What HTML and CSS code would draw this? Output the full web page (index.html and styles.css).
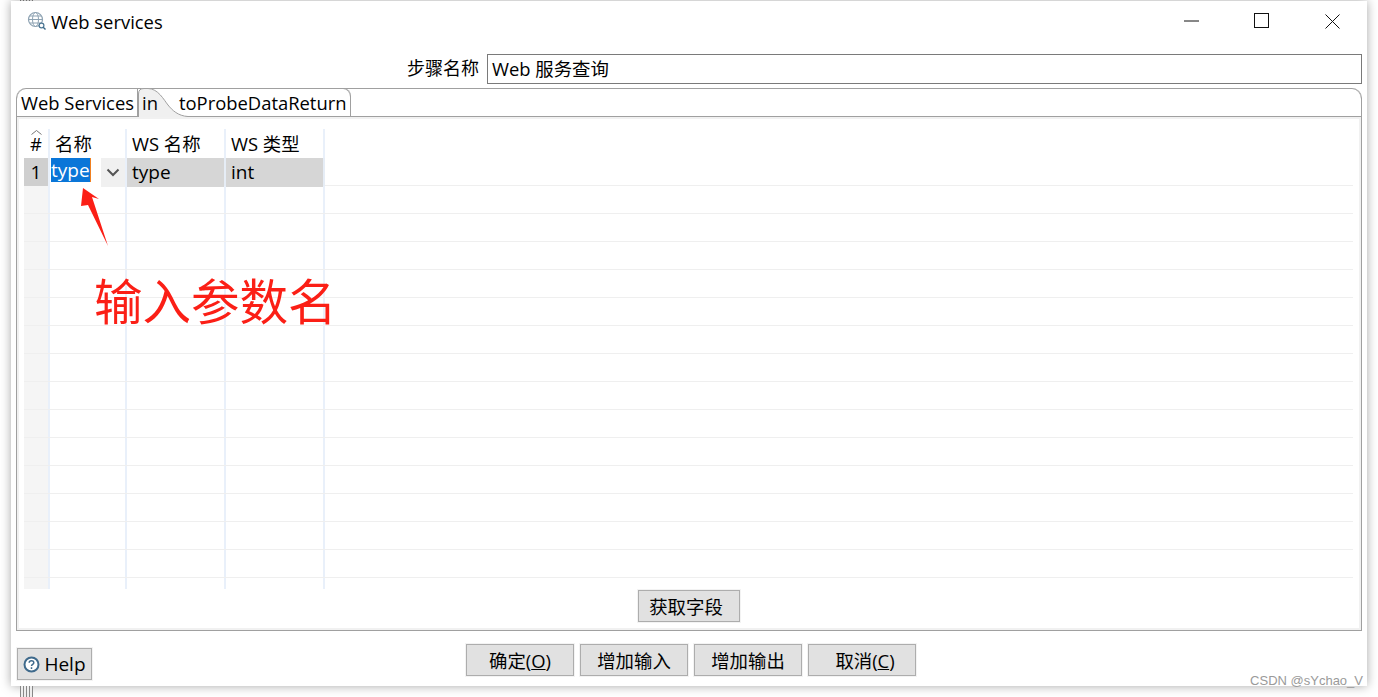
FILE: index.html
```html
<!DOCTYPE html>
<html lang="zh">
<head>
<meta charset="utf-8">
<title>Web services</title>
<link rel="stylesheet" href="styles.css">
</head>
<body>
<div class="stub stub-top"></div>
<main class="window">
  <header class="titlebar">
    <svg class="app-icon" width="20" height="20" viewBox="0 0 20 20" fill="none">
      <circle cx="8.500" cy="8.500" r="7" stroke="#8ea3b3" stroke-width="1.200"/>
      <ellipse cx="8.500" cy="8.500" rx="3" ry="7" stroke="#8ea3b3"/>
      <path d="M1.500 8.500h14M2.600 5h11.800M2.600 12h11.800" stroke="#8ea3b3"/>
      <circle cx="14.500" cy="14.500" r="2.400" fill="#fff" stroke="#4d7794" stroke-width="1.200"/>
      <path d="M16.200 16.200l2.300 2.300" stroke="#3d6a88" stroke-width="1.400"/>
    </svg>
    <span class="title">Web services</span>
    <div class="controls">
      <svg width="15" height="16" viewBox="0 0 15 16"><path d="M0 8h15" stroke="#111" fill="none"/></svg>
      <svg width="16" height="16" viewBox="0 0 16 16"><rect x=".5" y=".5" width="14" height="14" stroke="#111" fill="none"/></svg>
      <svg width="15" height="15" viewBox="0 0 15 15"><path d="M.5.5l14 14M14.500.5l-14 14" stroke="#111" fill="none"/></svg>
    </div>
  </header>

  <div class="step-row">
    <label class="step-label">步骤名称</label>
    <div class="step-input">Web 服务查询</div>
  </div>

  <section class="tabs">
    <div class="tabstrip">
      <span class="tab">Web Services</span>
      <span class="tab tab-active">in
        <svg class="tab-curve" width="51" height="29" viewBox="0 0 51 29"><path d="M0 29V6Q0 .5 6 .5H10C20 .5 26 12 30 17C34 22 40 28 50 28.500V29Z" fill="#f0f0f0"/><path d="M.5 29V6Q.5 .5 6 .5H10C20 .5 26 12 30 17C34 22 40 28 50 28.500" fill="none" stroke="#a0a0a0"/></svg>
      </span>
      <span class="tab tab-last">toProbeDataReturn</span>
    </div>
    <div class="panel">
      <div class="grid">
        <div class="row row-head">
          <div class="cell cell-num">#<svg class="sort" width="11" height="5" viewBox="0 0 11 5"><path d="M.5 4.500L5.500.5l5 4" fill="none" stroke="#777"/></svg></div>
          <div class="cell">名称</div>
          <div class="cell">WS 名称</div>
          <div class="cell">WS 类型</div>
        </div>
        <div class="row row-first">
          <div class="cell cell-num num-selected">1</div>
          <div class="cell cell-edit"><span class="editing">type</span><span class="combo"><svg width="14" height="9" viewBox="0 0 14 9"><path d="M1.500 1.500L7 7l5.500-5.500" fill="none" stroke="#555" stroke-width="2"/></svg></span></div>
          <div class="cell cell-selected">type</div>
          <div class="cell cell-selected">int</div>
        </div>
        <div class="row"><div class="cell cell-num"></div><div class="cell"></div><div class="cell"></div><div class="cell"></div></div>
        <div class="row"><div class="cell cell-num"></div><div class="cell"></div><div class="cell"></div><div class="cell"></div></div>
        <div class="row"><div class="cell cell-num"></div><div class="cell"></div><div class="cell"></div><div class="cell"></div></div>
        <div class="row"><div class="cell cell-num"></div><div class="cell"></div><div class="cell"></div><div class="cell"></div></div>
        <div class="row"><div class="cell cell-num"></div><div class="cell"></div><div class="cell"></div><div class="cell"></div></div>
        <div class="row"><div class="cell cell-num"></div><div class="cell"></div><div class="cell"></div><div class="cell"></div></div>
        <div class="row"><div class="cell cell-num"></div><div class="cell"></div><div class="cell"></div><div class="cell"></div></div>
        <div class="row"><div class="cell cell-num"></div><div class="cell"></div><div class="cell"></div><div class="cell"></div></div>
        <div class="row"><div class="cell cell-num"></div><div class="cell"></div><div class="cell"></div><div class="cell"></div></div>
        <div class="row"><div class="cell cell-num"></div><div class="cell"></div><div class="cell"></div><div class="cell"></div></div>
        <div class="row"><div class="cell cell-num"></div><div class="cell"></div><div class="cell"></div><div class="cell"></div></div>
        <div class="row"><div class="cell cell-num"></div><div class="cell"></div><div class="cell"></div><div class="cell"></div></div>
        <div class="row"><div class="cell cell-num"></div><div class="cell"></div><div class="cell"></div><div class="cell"></div></div>
        <div class="row"><div class="cell cell-num"></div><div class="cell"></div><div class="cell"></div><div class="cell"></div></div>
        <div class="row"><div class="cell cell-num"></div><div class="cell"></div><div class="cell"></div><div class="cell"></div></div>
      </div>
      <div class="panel-actions"><button class="btn btn-fields">获取字段</button></div>
    </div>
  </section>

  <footer class="footer">
    <button class="btn btn-help"><svg width="17" height="17" viewBox="0 0 17 17"><circle cx="8.500" cy="8.500" r="7" fill="#fff" stroke="#3f6a8c" stroke-width="2"/><path d="M6.200 6.800C6.200 4 10.800 4 10.800 6.700C10.800 8.400 8.500 8.300 8.500 10" fill="none" stroke="#3f6a8c" stroke-width="1.500"/><path d="M8.500 11.200v1.800" stroke="#3f6a8c" stroke-width="1.500"/></svg>Help</button>
    <div class="footer-actions">
      <button class="btn btn-main">确定(<u>O</u>)</button>
      <button class="btn btn-main">增加输入</button>
      <button class="btn btn-main">增加输出</button>
      <button class="btn btn-main btn-cancel">取消(<u>C</u>)</button>
    </div>
  </footer>

  <svg class="arrow" width="30" height="60" viewBox="0 0 30 60"><path d="M3 1L19 12L12 10L28 59L8 18L1 19Z" fill="#fb1f16"/></svg>
  <div class="note">输入参数名</div>
  <div class="watermark">CSDN @sYchao_V</div>
</main>
<div class="stub stub-bottom"></div>
</body>
</html>
```
FILE: styles.css
```css
* { box-sizing: border-box; }
html, body { margin: 0; height: 697px; overflow: hidden; }
body {
  background: #fff;
  padding: 1px 11px 0;
  font-family: "Open Sans", "Noto Sans CJK SC", sans-serif;
  font-size: 18.400px;
  color: #000;
  position: relative;
}
.stub {
  position: absolute;
  left: 20px;
  width: 13px;
  background: repeating-linear-gradient(90deg, #888 0 1px, #eee 1px 3px);
}
.stub-top { top: 0; height: 1px; }
.stub-bottom { top: 686px; height: 11px; }
.window {
  position: relative;
  width: 1356px;
  height: 685px;
  background: #fff;
  box-shadow: 0 0 10px rgba(0, 0, 0, .35);
  padding: 0 5px;
}
.titlebar {
  height: 44px;
  display: flex;
  align-items: center;
  margin: 0 -5px;
  padding: 0 27px 4px 16px;
}
.app-icon { margin-right: 4px; }
.title { font-size: 18.400px; }
.controls {
  margin-left: auto;
  display: flex;
  gap: 55px;
  align-items: center;
}
.step-row {
  height: 30px;
  margin-top: 9px;
  display: flex;
  justify-content: flex-end;
  align-items: center;
  gap: 8px;
}
.step-label { font-size: 18px; padding-bottom: 4px; }
.step-input {
  width: 875px;
  height: 30px;
  border: 1px solid #7a7a7a;
  padding: 0 4px;
  line-height: 28px;
}
.tabs {
  margin-top: 4px;
  height: 543px;
  border: 1px solid #a0a0a0;
  border-top: 0;
  border-radius: 10px 10px 0 0;
  display: flex;
  flex-direction: column;
  background: #fff;
  position: relative;
  box-shadow: inset 0 1px 0 #a0a0a0;
}
.tabstrip {
  height: 29px;
  display: flex;
  border-bottom: 1px solid #a0a0a0;
  flex: none;
}
.tab {
  line-height: 30px;
  padding: 0 3px 0 4px;
  white-space: nowrap;
  position: relative;
  border-right: 1px solid #a0a0a0;
}
.tab-active {
  width: 26px;
  border-right: 0;
  height: 29px;
  z-index: 1;
  isolation: isolate;
}
.tab-curve {
  position: absolute;
  left: 0;
  top: 0;
  z-index: -1;
}
.tab-last {
  margin-left: 14px;
  padding: 0 4px 0 1px;
  border-radius: 0 8px 0 0;
  box-shadow: inset 0 1px 0 #a0a0a0;
  z-index: 2;
}
.panel {
  flex: 1;
  border: 2px solid #f1f1f1;
  padding: 10px 6px 0 5px;
  display: flex;
  flex-direction: column;
}
.grid {
  height: 460px;
  overflow: hidden;
  flex: none;
}
.row {
  display: grid;
  grid-template-columns: 26px 77px 99px 99px 1fr;
  height: 28px;
  border-bottom: 1px solid #efefef;
}
.row-head { height: 29px; border-bottom: 0; }
.cell {
  border-right: 2px solid #e9f0fa;
  padding-left: 5px;
  line-height: 27px;
  white-space: nowrap;
  position: relative;
}
.row-head .cell { font-size: 18.400px; line-height: 30px; padding-left: 5px; }
.row-head .cell-num, .cell-num {
  background: #f5f5f5;
  padding: 0;
  text-align: center;
}
.row-head .cell-num { background: transparent; }
.sort {
  position: absolute;
  left: 7px;
  top: 1px;
}
.row-first .cell { font-size: 19px; }
.num-selected { background: #cfcfcf; line-height: 28px; }
.cell-selected { background: #d6d6d6; line-height: 29px; border-right-color: #e6edf6; padding-left: 5px; }
.cell-edit {
  padding: 0;
  display: flex;
  background: #fff;
}
.editing {
  width: 41px;
  height: 24px;
  margin-left: 1px;
  background: #0a76d8;
  color: #fff;
  line-height: 24px;
  border-right: 1px solid #f08020;
}
.combo {
  width: 25px;
  margin-left: 10px;
  background: #f0f0f0;
  display: flex;
  align-items: center;
  justify-content: center;
}
.panel-actions {
  display: flex;
  justify-content: center;
  padding: 1px 0 0 1px;
}
.btn {
  background: #e1e1e1;
  border: 1px solid #adadad;
  outline: 1px solid #f3f3f3;
  font-family: inherit;
  font-size: 18.400px;
  color: #000;
  padding: 0;
  height: 32px;
  display: inline-flex;
  align-items: center;
  justify-content: center;
}
.btn-fields { width: 102px; padding-right: 6px; }
.footer {
  position: relative;
  display: flex;
  height: 54px;
  padding-top: 13px;
}
.btn-help {
  position: absolute;
  left: 1px;
  top: 17px;
  width: 75px;
  gap: 4px;
  font-size: 19px;
}
.footer-actions {
  margin-left: 450px;
  display: flex;
  gap: 6px;
}
.btn-main { width: 108px; }
.btn-cancel { padding-left: 6px; }
.arrow {
  position: absolute;
  left: 69px;
  top: 186px;
}
.note {
  position: absolute;
  left: 83px;
  top: 263px;
  font-family: "Noto Sans CJK SC", sans-serif;
  font-size: 48.500px;
  font-weight: 400;
  line-height: 70px;
  color: #fb1f16;
  white-space: nowrap;
}
.watermark {
  position: absolute;
  right: 4px;
  bottom: -5px;
  font-family: "Liberation Sans", sans-serif;
  font-size: 13px;
  line-height: 20px;
  color: #9a9a9a;
}
```
